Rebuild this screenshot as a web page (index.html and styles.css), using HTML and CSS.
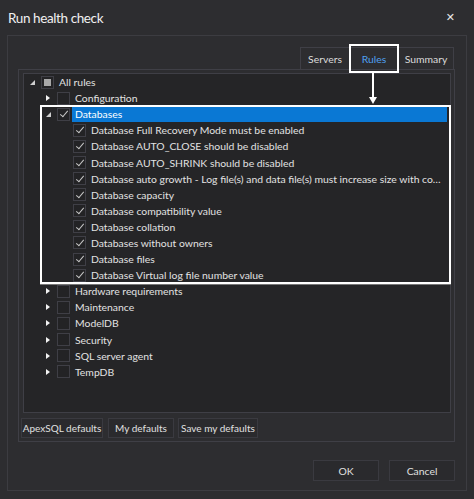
FILE: index.html
```html
<!DOCTYPE html>
<html lang="en">
<head>
    <meta charset="UTF-8">
    <title>Run health check</title>
    <link rel="stylesheet" href="styles.css">
</head>
<body>
    <div class="dialog">
        <div class="title-bar">
            <span class="title">Run health check</span>
            <span class="close">&#x2715;</span>
        </div>

        <div class="frame">
            <div class="tabs">
                <div class="tab servers">Servers</div>
                <div class="tab rules active">Rules</div>
                <div class="tab summary">Summary</div>
            </div>

            <div class="tab-panel">
                <div class="tree">
                    <div class="row lvl0"><span class="exp open"></span><span class="chk partial"></span><span class="label">All rules</span></div>
                    <div class="row lvl1"><span class="exp closed"></span><span class="chk"></span><span class="label">Configuration</span></div>
                    <div class="row lvl1"><span class="exp open"></span><span class="chk checked"></span><span class="label selected">Databases</span></div>
                    <div class="row lvl2"><span class="exp"></span><span class="chk checked"></span><span class="label">Database Full Recovery Mode must be enabled</span></div>
                    <div class="row lvl2"><span class="exp"></span><span class="chk checked"></span><span class="label">Database AUTO_CLOSE should be disabled</span></div>
                    <div class="row lvl2"><span class="exp"></span><span class="chk checked"></span><span class="label">Database AUTO_SHRINK should be disabled</span></div>
                    <div class="row lvl2"><span class="exp"></span><span class="chk checked"></span><span class="label">Database auto growth - Log file(s) and data file(s) must increase size with constant value</span></div>
                    <div class="row lvl2"><span class="exp"></span><span class="chk checked"></span><span class="label">Database capacity</span></div>
                    <div class="row lvl2"><span class="exp"></span><span class="chk checked"></span><span class="label">Database compatibility value</span></div>
                    <div class="row lvl2"><span class="exp"></span><span class="chk checked"></span><span class="label">Database collation</span></div>
                    <div class="row lvl2"><span class="exp"></span><span class="chk checked"></span><span class="label">Databases without owners</span></div>
                    <div class="row lvl2"><span class="exp"></span><span class="chk checked"></span><span class="label">Database files</span></div>
                    <div class="row lvl2"><span class="exp"></span><span class="chk checked"></span><span class="label">Database Virtual log file number value</span></div>
                    <div class="row lvl1"><span class="exp closed"></span><span class="chk"></span><span class="label">Hardware requirements</span></div>
                    <div class="row lvl1"><span class="exp closed"></span><span class="chk"></span><span class="label">Maintenance</span></div>
                    <div class="row lvl1"><span class="exp closed"></span><span class="chk"></span><span class="label">ModelDB</span></div>
                    <div class="row lvl1"><span class="exp closed"></span><span class="chk"></span><span class="label">Security</span></div>
                    <div class="row lvl1"><span class="exp closed"></span><span class="chk"></span><span class="label">SQL server agent</span></div>
                    <div class="row lvl1"><span class="exp closed"></span><span class="chk"></span><span class="label">TempDB</span></div>
                </div>

                <div class="defaults">
                    <button class="btn apex">ApexSQL defaults</button>
                    <button class="btn mine">My defaults</button>
                    <button class="btn save">Save my defaults</button>
                </div>
            </div>

            <div class="actions">
                <button class="btn wide">OK</button>
                <button class="btn wide">Cancel</button>
            </div>
        </div>
    </div>

    <!-- callout: Rules tab pointing at the Databases group -->
    <div class="callout-tab"></div>
    <svg class="callout-arrow" width="12" height="32" viewBox="0 0 12 32">
        <line x1="6" y1="0" x2="6" y2="26" stroke="#fff" stroke-width="2"/>
        <polygon points="2,24 10,24 6,31" fill="#fff"/>
    </svg>
    <div class="callout-group"></div>
</body>
</html>
```

FILE: styles.css
```css
body {
    margin: 0;
    background-color: #2d2d30;
    font-family: 'Lato', sans-serif;
    font-size: 10.4px;
    color: #e2e2e2;
    width: 474px;
    height: 499px;
    overflow: hidden;
}

.dialog {
    height: 499px;
    display: flex;
    flex-direction: column;
}

.title-bar {
    height: 35px;
    display: flex;
    align-items: center;
    justify-content: space-between;
    padding: 0 19px 0 8px;
}

.title {
    font-size: 13.5px;
    letter-spacing: -0.4px;
    color: #f0f0f0;
}

.close {
    font-family: 'DejaVu Sans', sans-serif;
    font-size: 11px;
    font-weight: bold;
    color: #e8e8e8;
}

.frame {
    margin: 0 7px;
    height: 456px;
    box-sizing: border-box;
    border: 1px solid #3c3c41;
    padding: 11px 11px 0 10px;
    display: flex;
    flex-direction: column;
}

.tabs {
    display: flex;
    justify-content: flex-end;
    height: 22px;
    padding-right: 1px;
}

.tab {
    border: 1px solid #3f3f46;
    border-bottom: none;
    display: flex;
    align-items: center;
    justify-content: center;
    box-sizing: border-box;
    color: #dcdcdc;
}

.tab.servers {
    width: 50px;
}

.tab.rules {
    width: 48px;
}

.tab.summary {
    width: 56px;
}

.tab.active {
    color: #4fa0f0;
    background-color: #2d2d30;
}

.tab-panel {
    border: 1px solid #3f3f46;
    height: 373px;
    box-sizing: border-box;
    padding: 3px 3px 0 4px;
    display: flex;
    flex-direction: column;
}

.tree {
    height: 340px;
    box-sizing: border-box;
    border: 1px solid #3f3f46;
    background-color: #252527;
}

.row {
    display: flex;
    align-items: center;
    height: 16.1px;
}

.lvl1 {
    padding-left: 16px;
}

.lvl2 {
    padding-left: 32px;
}

.exp {
    width: 17px;
    height: 16px;
    flex: none;
    position: relative;
}

.exp.closed::after {
    content: '';
    position: absolute;
    left: 6px;
    top: 5px;
    border-left: 4px solid #f2f2f2;
    border-top: 3.5px solid transparent;
    border-bottom: 3.5px solid transparent;
}

.exp.open::after {
    content: '';
    position: absolute;
    left: 6px;
    top: 6px;
    border-right: 5px solid #cfcfcf;
    border-top: 5px solid transparent;
}

.chk {
    width: 13px;
    height: 13px;
    box-sizing: border-box;
    border: 1px solid #3f3f46;
    background-color: #232325;
    flex: none;
    position: relative;
}

.chk.partial::after {
    content: '';
    position: absolute;
    left: 2px;
    top: 2px;
    width: 7px;
    height: 7px;
    background-color: #a8a8a8;
}

.chk.checked::after {
    content: '';
    position: absolute;
    left: 3.5px;
    top: 0.5px;
    width: 3px;
    height: 7px;
    border-right: 1.5px solid #c8c8c8;
    border-bottom: 1.5px solid #c8c8c8;
    transform: rotate(40deg);
}

.label {
    flex: 1;
    min-width: 0;
    margin: 0 3px 0 2px;
    padding: 0 3px;
    line-height: 16px;
    white-space: nowrap;
    overflow: hidden;
    text-overflow: ellipsis;
}

.label.selected {
    background-color: #0a78d4;
    color: #fff;
}

.defaults {
    display: flex;
    margin: 5px 0 0 -2px;
}

.btn {
    font-family: inherit;
    font-size: 10px;
    white-space: nowrap;
    color: #e0e0e0;
    background-color: #2a2a2d;
    border: 1px solid #3a3a40;
    height: 20px;
    padding: 0;
    cursor: pointer;
}

.btn.apex {
    width: 82px;
}

.btn.mine {
    width: 66px;
    margin-left: 5px;
}

.btn.save {
    width: 80px;
    margin-left: 4px;
}

.actions {
    display: flex;
    justify-content: flex-end;
    gap: 10px;
    margin-top: 18px;
}

.btn.wide {
    width: 66px;
    height: 21px;
    font-size: 10.4px;
}

.callout-tab {
    position: absolute;
    left: 349px;
    top: 44px;
    width: 46px;
    height: 25px;
    border: 2px solid #fff;
}

.callout-arrow {
    position: absolute;
    left: 367px;
    top: 73px;
}

.callout-group {
    position: absolute;
    left: 40px;
    top: 105px;
    width: 407px;
    height: 175px;
    border: 2px solid #fff;
    box-shadow: 0 1px 0 #777;
}
```
